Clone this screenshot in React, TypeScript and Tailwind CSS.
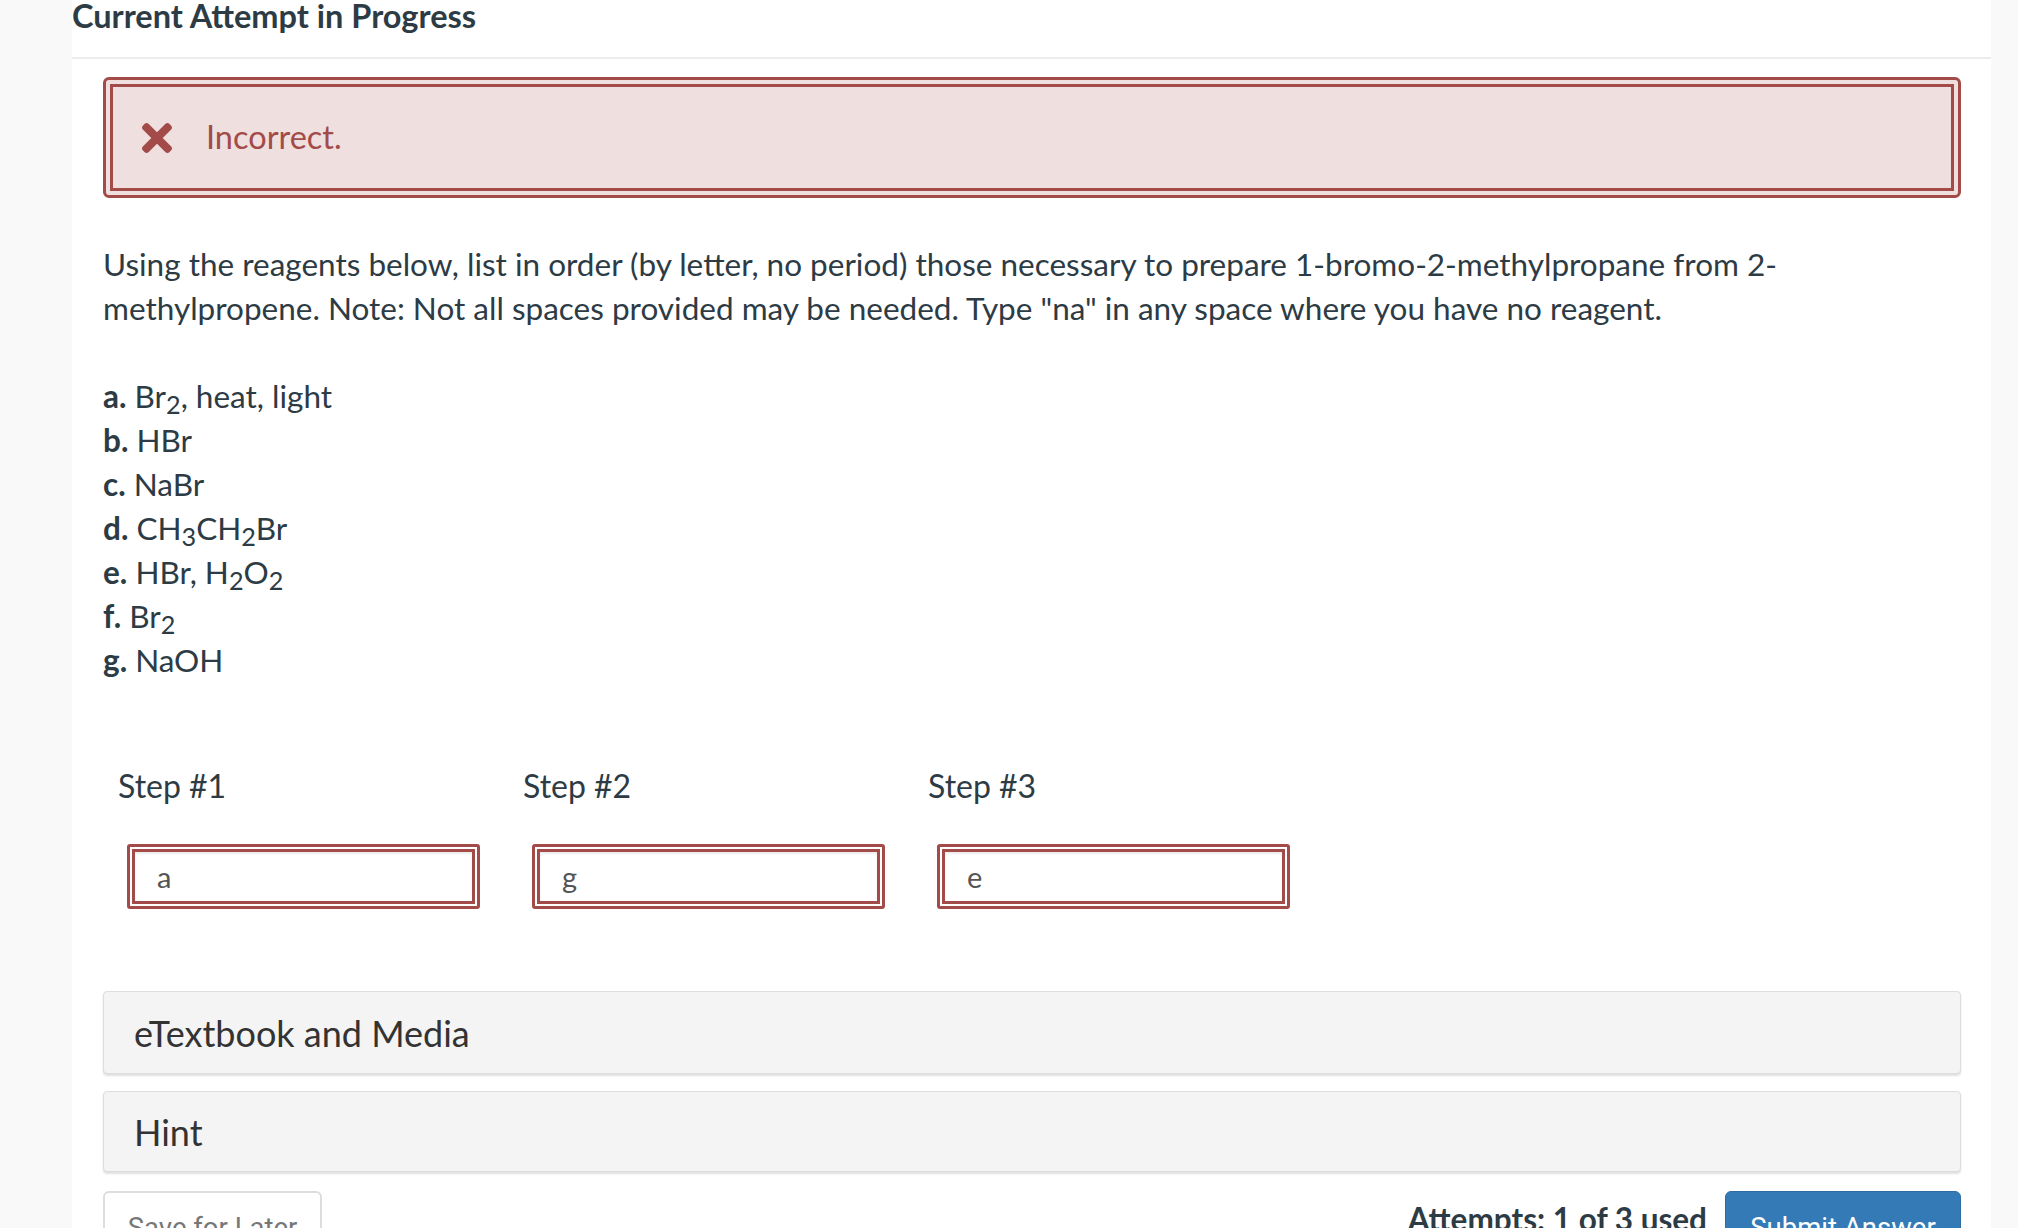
import React from 'react';

// Reagent list entries
const reagents: { letter: string; parts: (string | { sub: string })[] }[] = [
  { letter: 'a.', parts: ['Br', { sub: '2' }, ', heat, light'] },
  { letter: 'b.', parts: ['HBr'] },
  { letter: 'c.', parts: ['NaBr'] },
  { letter: 'd.', parts: ['CH', { sub: '3' }, 'CH', { sub: '2' }, 'Br'] },
  { letter: 'e.', parts: ['HBr, H', { sub: '2' }, 'O', { sub: '2' }] },
  { letter: 'f.', parts: ['Br', { sub: '2' }] },
  { letter: 'g.', parts: ['NaOH'] },
];

const steps = [
  { label: 'Step #1', value: 'a' },
  { label: 'Step #2', value: 'g' },
  { label: 'Step #3', value: 'e' },
];

const TimesIcon = () => (
  <svg viewBox="0 80 352 352" className="w-[30px] h-[30px] shrink-0" fill="#a24b48">
    <path d="M242.72 256l100.07-100.07c12.28-12.28 12.28-32.19 0-44.48l-22.24-22.24c-12.28-12.28-32.19-12.28-44.48 0L176 189.28 75.930 89.21c-12.28-12.28-32.19-12.280-44.48 0L9.21 111.45c-12.28 12.28-12.28 32.19 0 44.48L109.28 256 9.21 356.07c-12.28 12.28-12.28 32.19 0 44.48l22.24 22.24c12.28 12.28 32.2 12.28 44.48 0L176 322.72l100.07 100.07c12.28 12.28 32.2 12.28 44.48 0l22.24-22.24c12.28-12.28 12.28-32.19 0-44.48L242.72 256z" />
  </svg>
);

const App = () => {
  return (
    <div className="h-[1228px] overflow-hidden flex bg-white [font-family:Lato,'Open_Sans',sans-serif] text-[#2d3b45]">
      {/* Left gutter */}
      <div className="w-[72px] shrink-0 bg-[#f9f9f9]" />

      <main className="flex-1 min-w-0">
        {/* Header */}
        <div className="h-[62px] border-b-2 border-[#ececec]">
          <h2 className="mt-[-3px] text-[32.5px] leading-[38px] font-bold">Current Attempt in Progress</h2>
        </div>

        <div className="pl-[31px] pr-[30px]">
          {/* Feedback */}
          <div className="mt-[18px] h-[121px] flex items-center pl-[29px] border-[10px] border-double border-[#a24b48] rounded-[6px] bg-[#efdfdf]">
            <TimesIcon />
            <span className="ml-[34px] text-[32.5px] text-[#a24b48]">Incorrect.</span>
          </div>

          {/* Question */}
          <p className="mt-[44px] text-[31.5px] leading-[44px]">
            Using the reagents below, list in order (by letter, no period) those necessary to prepare 1-bromo-2-methylpropane from 2-methylpropene. Note: Not all spaces provided may be needed. Type "na" in any space where you have no reagent.
          </p>

          <div className="mt-[44px] text-[31.5px] leading-[44px]">
            {reagents.map((r) => (
              <div key={r.letter}>
                <span className="font-bold">{r.letter}</span>{' '}
                {r.parts.map((p, i) =>
                  typeof p === 'string' ? (
                    <span key={i}>{p}</span>
                  ) : (
                    <sub key={i} className="text-[0.8em]">{p.sub}</sub>
                  )
                )}
              </div>
            ))}
          </div>

          {/* Steps */}
          <div className="mt-[82px] flex pl-[15px]">
            {steps.map((s) => (
              <div key={s.label} className="w-[405px] shrink-0">
                <div className="text-[32px] leading-[44px]">{s.label}</div>
                <div className="mt-[36px] ml-[9px] w-[353px] h-[65px] flex items-center pl-[22px] border-[8px] border-double border-[#a24b48] rounded-[3px] bg-white shadow-[inset_0_2px_2px_rgba(0,0,0,0.08)] text-[29px] text-[#555555]">
                  {s.value}
                </div>
              </div>
            ))}
          </div>

          {/* Panels */}
          <div className="mt-[82px] h-[83px] flex items-center pl-[30px] bg-[#f4f4f4] border border-[#dddddd] rounded-[4px] shadow-[0_2px_2px_rgba(0,0,0,0.12)] text-[36px] text-[#333333]">
            eTextbook and Media
          </div>
          <div className="mt-[17px] h-[81px] flex items-center pl-[30px] bg-[#f4f4f4] border border-[#dddddd] rounded-[4px] shadow-[0_2px_2px_rgba(0,0,0,0.12)] text-[36px] text-[#333333]">
            Hint
          </div>

          {/* Actions */}
          <div className="mt-[19px] flex items-start justify-between">
            <button className="w-[219px] h-[60px] pt-[14px] border-2 border-[#dddddd] rounded-[6px] bg-white text-[27.5px] leading-[32px] text-[#777777] [font-family:Roboto,sans-serif] text-center">
              <span className="block">Save for Later</span>
            </button>
            <div className="flex items-start">
              <span className="mt-[9px] text-[31.5px] leading-[38px] font-bold">Attempts: 1 of 3 used</span>
              <button className="ml-[18px] w-[236px] h-[60px] pt-[14px] border border-[#2e6da4] rounded-[6px] bg-[#337ab7] text-[27.5px] leading-[32px] text-white [font-family:Roboto,sans-serif]">
                <span className="block">Submit Answer</span>
              </button>
            </div>
          </div>
        </div>
      </main>

      {/* Right gutter */}
      <div className="w-[27px] shrink-0 bg-[#f9f9f9]" />
    </div>
  );
};

export default App;
